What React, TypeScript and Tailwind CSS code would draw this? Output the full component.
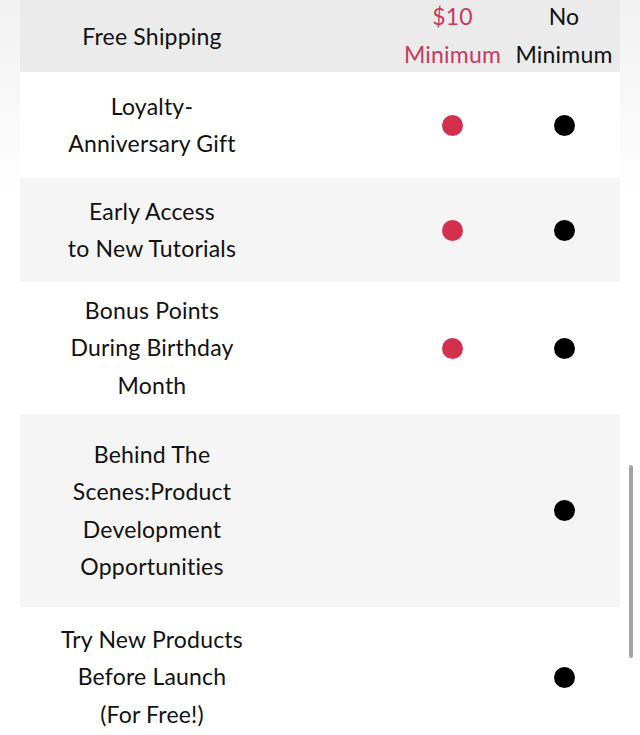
import React from "react";

type Row = {
  label: string[];
  red: boolean;
  black: boolean;
  h: string;
  bg: string;
};

const ROWS: Row[] = [
  { label: ["Loyalty-", "Anniversary Gift"], red: true, black: true, h: "h-[106px]", bg: "bg-white" },
  { label: ["Early Access", "to New Tutorials"], red: true, black: true, h: "h-[104px]", bg: "bg-[#f5f5f5]" },
  { label: ["Bonus Points", "During Birthday", "Month"], red: true, black: true, h: "h-[132px]", bg: "bg-white" },
  {
    label: ["Behind The", "Scenes:Product", "Development", "Opportunities"],
    red: false,
    black: true,
    h: "h-[193px]",
    bg: "bg-[#f5f5f5]",
  },
  { label: ["Try New Products", "Before Launch", "(For Free!)"], red: false, black: true, h: "h-[140px]", bg: "bg-white" },
];

function Dot({ color }: { color: string }) {
  return <span className={`block w-[21px] h-[21px] rounded-full ${color}`} />;
}

export default function App() {
  return (
    <div
      className="relative w-[640px] h-[735px] overflow-hidden bg-[linear-gradient(to_bottom,#f1f1f1_0px,#fafafa_120px,#ffffff_200px)] text-[#111] text-[23px] leading-[37.5px] tracking-[0.2px]"
      style={{ fontFamily: "Lato, 'Liberation Sans', sans-serif" }}
    >
      <div className="mx-[20px]">
        {/* header */}
        <div className="grid grid-cols-[264px_1fr_111px_112px] h-[72px] items-center bg-[#ebebeb] text-center">
          <div className="pt-[1px]">Free Shipping</div>
          <div />
          <div className="text-[#c9385f] -mt-[2px]">
            <div>$10</div>
            <div>Minimum</div>
          </div>
          <div className="-mt-[2px]">
            <div>No</div>
            <div>Minimum</div>
          </div>
        </div>

        {ROWS.map((row, i) => (
          <div
            key={i}
            className={`grid grid-cols-[264px_1fr_111px_112px] items-center text-center ${row.h} ${row.bg}`}
          >
            <div>
              {row.label.map((l, j) => (
                <div key={j}>{l}</div>
              ))}
            </div>
            <div />
            <div className="flex justify-center">{row.red && <Dot color="bg-[#d3304d]" />}</div>
            <div className="flex justify-center">{row.black && <Dot color="bg-black" />}</div>
          </div>
        ))}
      </div>

      {/* overlay scrollbar */}
      <div className="absolute left-[629px] top-[465px] w-[4px] h-[193px] rounded-full bg-[#a3a3a3]" />
    </div>
  );
}
